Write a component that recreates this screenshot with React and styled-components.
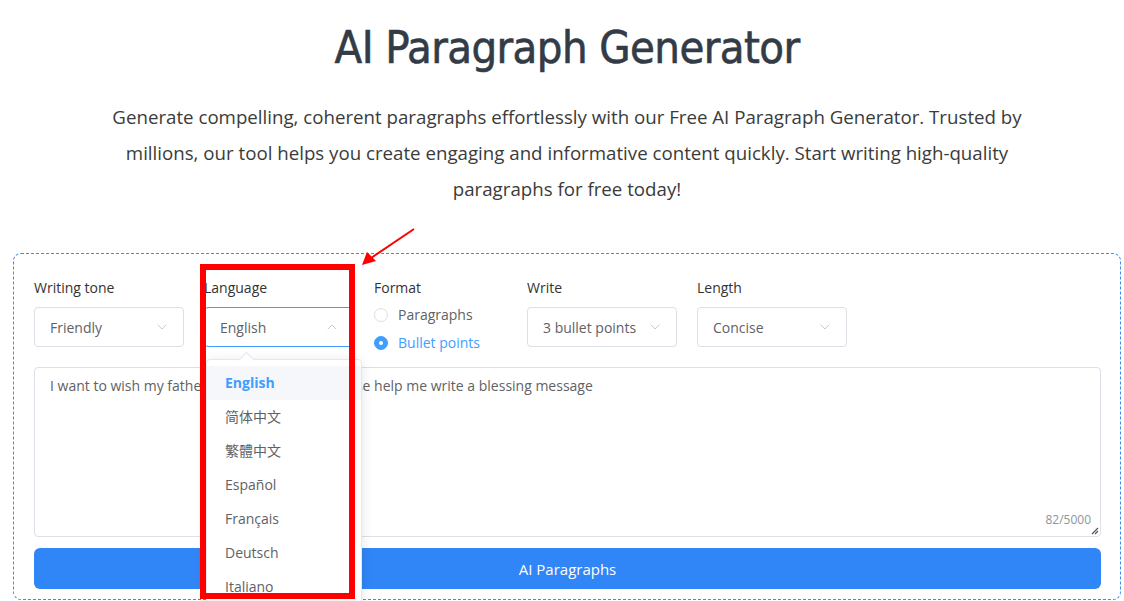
import React from 'react';
import styled, {createGlobalStyle} from 'styled-components';
import {ChevronDown, ChevronUp} from 'lucide-react';

const GlobalStyle = createGlobalStyle`
	html, body {
		margin: 0;
		padding: 0;
		background: #fff;
		overflow: hidden;
	}
	body {
		font-family: 'Open Sans', 'Noto Sans CJK SC', sans-serif;
		color: #303133;
	}
`;

const Page = styled.div`
	width: 1108px;
	height: 601px;
	padding-left: 13px;
	position: relative;
	overflow: hidden;
`;

const Title = styled.h1`
	margin: 0;
	padding-top: 19px;
	height: 58px;
	line-height: 58px;
	text-align: center;
	font-family: 'DejaVu Sans Condensed', 'DejaVu Sans', sans-serif;
	font-stretch: condensed;
	font-weight: 400;
	font-size: 45px;
	letter-spacing: -0.6px;
	color: #323b46;
	-webkit-text-stroke: 0.6px #323b46;
`;

const Intro = styled.p`
	margin: 22px auto 0;
	width: 960px;
	text-align: center;
	font-size: 18.7px;
	line-height: 36px;
	color: #3b3b3b;
`;

const Card = styled.section`
	margin-top: 46px;
	border: 1px dashed #3b8cf5;
	border-radius: 8px;
	padding: 23px 19px 10px 20px;
`;

const Options = styled.div`
	display: flex;
	gap: 20px;
`;

const Field = styled.div`
	display: flex;
	flex-direction: column;
	gap: 10px;
	width: ${p => p.$width || 150}px;
	position: relative;
`;

const Label = styled.div`
	font-size: 14px;
	line-height: 21px;
	color: #333;
`;

const SelectBox = styled.div`
	box-sizing: border-box;
	height: 40px;
	display: flex;
	align-items: center;
	justify-content: space-between;
	padding: 0 13px 0 15px;
	border: 1px solid ${p => (p.$open ? '#409eff' : '#dcdfe6')};
	border-radius: 4px;
	font-size: 14px;
	color: #606266;
	margin-top: -1px;
	svg {
		color: #c0c4cc;
	}
`;

const RadioList = styled.div`
	display: flex;
	flex-direction: column;
	gap: 8px;
	height: 40px;
	margin-top: -3px;
`;

const RadioRow = styled.label`
	display: flex;
	align-items: center;
	gap: 10px;
	font-size: 14px;
	line-height: 20px;
	color: ${p => (p.$checked ? '#409eff' : '#606266')};
`;

const RadioDot = styled.span`
	box-sizing: border-box;
	width: 14px;
	height: 14px;
	border-radius: 50%;
	border: 1px solid ${p => (p.$checked ? '#409eff' : '#dcdfe6')};
	background: ${p => (p.$checked ? '#409eff' : '#fff')};
	display: flex;
	align-items: center;
	justify-content: center;
	&::after {
		content: '';
		width: 4px;
		height: 4px;
		border-radius: 50%;
		background: #fff;
		display: ${p => (p.$checked ? 'block' : 'none')};
	}
`;

const TextBox = styled.div`
	box-sizing: border-box;
	margin-top: 20px;
	height: 170px;
	border: 1px solid #dcdfe6;
	border-radius: 4px;
	padding: 8px 15px;
	position: relative;
	font-size: 14px;
	line-height: 20px;
	color: #606266;
`;

const Counter = styled.span`
	position: absolute;
	right: 9px;
	bottom: 6px;
	font-size: 12px;
	color: #909399;
`;

const Grip = styled.svg`
	position: absolute;
	right: 1px;
	bottom: 1px;
`;

const GenerateButton = styled.button`
	display: block;
	width: 100%;
	margin-top: 11px;
	height: 41px;
	border: none;
	border-radius: 6px;
	background: #3085f7;
	color: #fff;
	font-family: 'Open Sans', sans-serif;
	font-size: 15px;
`;

const Dropdown = styled.ul`
	position: absolute;
	top: 82px;
	left: 2px;
	width: 154px;
	margin: 0;
	padding: 6px 0;
	list-style: none;
	background: #fff;
	border: 1px solid #e4e7ed;
	border-radius: 4px;
	box-shadow: 0 2px 12px rgba(0, 0, 0, 0.1);
	z-index: 5;
	&::before {
		content: '';
		position: absolute;
		top: -6px;
		left: 34px;
		width: 10px;
		height: 10px;
		background: #fff;
		border-left: 1px solid #e4e7ed;
		border-top: 1px solid #e4e7ed;
		transform: rotate(45deg);
	}
`;

const Option = styled.li`
	height: 34px;
	line-height: 34px;
	padding: 0 18px;
	font-size: 14px;
	color: ${p => (p.$selected ? '#409eff' : '#606266')};
	font-weight: ${p => (p.$selected ? 700 : 400)};
	background: ${p => (p.$selected ? '#f5f7fa' : 'transparent')};
	position: relative;
`;

const Highlight = styled.div`
	position: absolute;
	left: 200px;
	top: 264px;
	width: 143px;
	height: 323px;
	border: 6px solid #ff0000;
	pointer-events: none;
	z-index: 10;
`;

const Arrow = styled.svg`
	position: absolute;
	left: 355px;
	top: 225px;
	z-index: 10;
`;

const languages = ['English', '简体中文', '繁體中文', 'Español', 'Français', 'Deutsch', 'Italiano'];

export default function App() {
	return (
		<Page>
			<GlobalStyle/>
			<Title>AI Paragraph Generator</Title>
			<Intro>
				Generate compelling, coherent paragraphs effortlessly with our Free AI Paragraph Generator. Trusted by
				millions, our tool helps you create engaging and informative content quickly. Start writing high-quality
				paragraphs for free today!
			</Intro>
			<Card>
				<Options>
					<Field>
						<Label>Writing tone</Label>
						<SelectBox>Friendly<ChevronDown size={16} strokeWidth={1.3}/></SelectBox>
					</Field>
					<Field>
						<Label>Language</Label>
						<SelectBox $open>English<ChevronUp size={16} strokeWidth={1.3}/></SelectBox>
						<Dropdown>
							{languages.map((lang, i) => (
								<Option key={lang} $selected={i === 0}>{lang}</Option>
							))}
						</Dropdown>
					</Field>
					<Field $width={133}>
						<Label>Format</Label>
						<RadioList>
							<RadioRow><RadioDot/>Paragraphs</RadioRow>
							<RadioRow $checked><RadioDot $checked/>Bullet points</RadioRow>
						</RadioList>
					</Field>
					<Field>
						<Label>Write</Label>
						<SelectBox>3 bullet points<ChevronDown size={16} strokeWidth={1.3}/></SelectBox>
					</Field>
					<Field>
						<Label>Length</Label>
						<SelectBox>Concise<ChevronDown size={16} strokeWidth={1.3}/></SelectBox>
					</Field>
				</Options>
				<TextBox>
					I want to wish my father a happy birthday, please help me write a blessing message
					<Counter>82/5000</Counter>
					<Grip width="10" height="10" viewBox="0 0 10 10">
						<path d="M9 3 L3 9 M9 6 L6 9" stroke="#555" strokeWidth="1.2"/>
					</Grip>
				</TextBox>
				<GenerateButton>AI Paragraphs</GenerateButton>
			</Card>
			<Highlight/>
			<Arrow width="70" height="50" viewBox="0 0 70 50">
				<line x1="59" y1="4" x2="16" y2="33" stroke="#ff0000" strokeWidth="2"/>
				<polygon points="7,40 12,27 21,36" fill="#ff0000"/>
			</Arrow>
		</Page>
	);
}
